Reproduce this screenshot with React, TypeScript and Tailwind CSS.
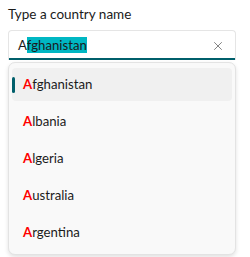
import { X } from "lucide-react";

const countries = ["Afghanistan", "Albania", "Algeria", "Australia", "Argentina"];

export default function App() {
  return (
    <div className="h-[257px] w-[250px] bg-white px-2 pt-[4px] font-['Segoe_UI','Lato',sans-serif] text-[#1b1b1b]">
      {/* Label */}
      <div className="text-[13.5px] leading-[20px]">Type a country name</div>

      {/* Input */}
      <div className="mt-[6px] flex h-[30px] w-[228px] items-center justify-between rounded-t-[4px] border border-b-0 border-[#e5e5e5] bg-white pl-[9px] pr-[10px] shadow-[inset_0_-2px_0_#005f6b]">
        <div className="text-[13.2px] leading-[17px]">
          A<span className="bg-[#00b7c3] text-[#1b1b1b]">fghanistan</span>
        </div>
        <X className="h-[14px] w-[14px] text-[#5d5d5d]" strokeWidth={1.3} />
      </div>

      {/* Suggestions */}
      <div className="mt-[2px] w-[228px] rounded-[7px] border border-[#e3e3e3] bg-[#f9f9f9] px-[3px] pt-[5px] pb-[5px] shadow-[0_2px_4px_rgba(0,0,0,0.12)]">
        {countries.map((c, i) => (
          <div
            key={c}
            className={`relative flex h-[33px] items-center rounded-[4px] pl-[11px] text-[13.2px] ${
              i === 0 ? "bg-[#f0f0f0]" : ""
            } ${i > 0 ? "mt-[4px]" : ""}`}
          >
            {i === 0 && (
              <span className="absolute left-0 top-[9px] h-[16px] w-[3px] rounded-full bg-[#005f6b]" />
            )}
            <span className="font-bold text-[#ff0000]">{c[0]}</span>
            <span>{c.slice(1)}</span>
          </div>
        ))}
      </div>
    </div>
  );
}
